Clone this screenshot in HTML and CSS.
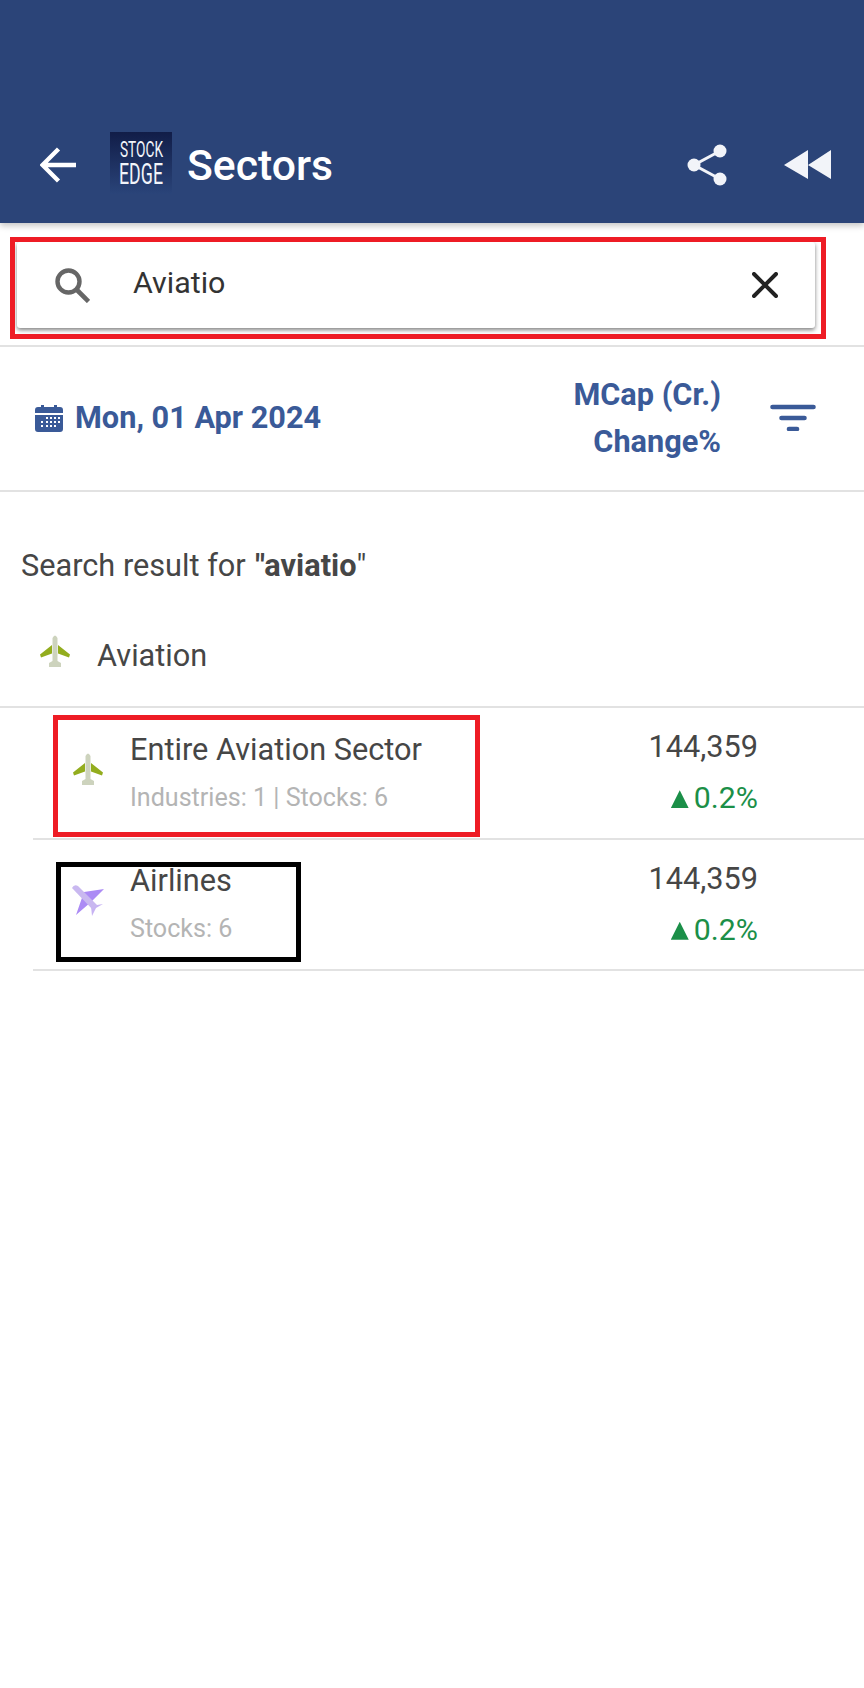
FILE: index.html
```html
<!DOCTYPE html>
<html lang="en">
<head>
<meta charset="utf-8">
<title>Sectors</title>
<link rel="stylesheet" href="styles.css">
</head>
<body>
<div class="page">
  <header class="appbar">
    <button class="icon-btn back" aria-label="Back">
      <svg width="37" height="36" viewBox="0 0 37 36"><path d="M36 18H3M18.500 2 2.500 18l16 16" fill="none" stroke="#fff" stroke-width="4.400"/></svg>
    </button>
    <div class="logo">
      <svg class="logo-svg" width="62" height="62" viewBox="0 0 62 62">
        <defs><linearGradient id="lg" x1="0" y1="0" x2="0" y2="1"><stop offset="0" stop-color="#111d48"/><stop offset="1" stop-color="#2a4479"/></linearGradient></defs>
        <rect width="62" height="62" fill="url(#lg)"/>
        <text class="logo-text" x="10" y="25" font-size="22" textLength="43" lengthAdjust="spacingAndGlyphs">STOCK</text>
        <text class="logo-text" x="9" y="52" font-size="29" textLength="44" lengthAdjust="spacingAndGlyphs">EDGE</text>
      </svg>
    </div>
    <h1 class="title">Sectors</h1>
    <button class="icon-btn share" aria-label="Share">
      <svg width="40" height="42" viewBox="0 0 40 42"><g fill="#f2f4f9"><circle cx="33" cy="7" r="6.500"/><circle cx="7" cy="21" r="6.500"/><circle cx="33" cy="35" r="6.500"/></g><path d="M33 7 7 21l26 14" fill="none" stroke="#f2f4f9" stroke-width="3"/></svg>
    </button>
    <button class="icon-btn rewind" aria-label="Rewind">
      <svg width="48" height="30" viewBox="0 0 48 30"><path d="M0 15 24 0v29zM24 15 47 0v29z" fill="#f2f4f9"/></svg>
    </button>
  </header>

  <div class="search-wrap">
    <div class="search-card">
      <svg class="search-icon" width="36" height="36" viewBox="0 0 36 36"><circle cx="14.500" cy="14.500" r="11" fill="none" stroke="#666" stroke-width="4.400"/><path d="m22.500 22.500 12 12" stroke="#666" stroke-width="4.600" fill="none"/></svg>
      <span class="search-text">Aviatio</span>
      <svg class="clear-icon" width="26" height="26" viewBox="0 0 26 26"><path d="M2 2l22 22M24 2 2 24" stroke="#222" stroke-width="4" stroke-linecap="round" fill="none"/></svg>
    </div>
  </div>

  <div class="filter-bar">
    <svg class="cal" width="28" height="28" viewBox="0 0 28 28">
      <path d="M6 1h3v2h10V1h3v2h3a3 3 0 0 1 3 3v3H0V6a3 3 0 0 1 3-3h3zM0 11h28v14a3 3 0 0 1-3 3H3a3 3 0 0 1-3-3z" fill="#3a5a98"/>
      <g fill="#fff"><rect x="11" y="13" width="2" height="2"/><rect x="15" y="13" width="2" height="2"/><rect x="19" y="13" width="2" height="2"/><rect x="23" y="13" width="2" height="2"/><rect x="6" y="17" width="2" height="2"/><rect x="11" y="17" width="2" height="2"/><rect x="15" y="17" width="2" height="2"/><rect x="19" y="17" width="2" height="2"/><rect x="23" y="17" width="2" height="2"/><rect x="6" y="21" width="2" height="2"/><rect x="11" y="21" width="2" height="2"/><rect x="15" y="21" width="2" height="2"/><rect x="19" y="21" width="2" height="2"/></g>
    </svg>
    <span class="date">Mon, 01 Apr 2024</span>
    <div class="columns">
      <div>MCap (Cr.)</div>
      <div>Change%</div>
    </div>
    <svg class="filter" width="46" height="27" viewBox="0 0 46 27"><path d="M2.500 3h41M11.500 14h23M19 25h8" stroke="#3a5a98" stroke-width="4.600" stroke-linecap="round" fill="none"/></svg>
  </div>

  <p class="result-note">Search result for <b class="query">"aviatio</b>"</p>

  <div class="group-head">
    <svg class="plane plane-head" width="30" height="32" viewBox="0 0 30 32"><use href="#plane-shape"/></svg>
    <span>Aviation</span>
  </div>

  <section class="rows">
    <div class="row">
      <svg class="plane" width="30" height="32" viewBox="0 0 30 32"><use href="#plane-shape"/></svg>
      <div class="row-main">
        <div class="row-title">Entire Aviation Sector</div>
        <div class="row-sub">Industries: 1 | Stocks: 6</div>
      </div>
      <div class="row-vals">
        <div class="mcap">144,359</div>
        <div class="chg"><i class="tri"></i>0.2%</div>
      </div>
    </div>
    <div class="row">
      <svg class="plane-alt" width="32" height="32" viewBox="0 0 32 32">
        <path d="M12 8 32 5 19 18zM12 8 4 31 19 18z" fill="#ac8bf5"/>
        <path d="M19 22 31 20 24 24 20 32z" fill="#c7b3f3"/>
        <path d="M0 4Q2 0 6 2L25 21 21 26z" fill="#c9b8f0"/>
      </svg>
      <div class="row-main">
        <div class="row-title">Airlines</div>
        <div class="row-sub">Stocks: 6</div>
      </div>
      <div class="row-vals">
        <div class="mcap">144,359</div>
        <div class="chg"><i class="tri"></i>0.2%</div>
      </div>
    </div>
  </section>

  <div class="mark mark-search"></div>
  <div class="mark mark-row"></div>
  <div class="mark mark-black"></div>

  <svg class="defs" width="0" height="0" aria-hidden="true">
    <defs>
      <g id="plane-shape">
        <path d="M12 10 0 19.500 1 22.500 12 18.500zM18 10 30 19.500 29 22.500 18 18.500z" fill="#93ad1e"/>
        <path d="M12.500 3Q15 -2 17.500 3V26L21 28V32H9V28L12.500 26z" fill="#cdd3bd"/>
      </g>
    </defs>
  </svg>
</div>
</body>
</html>
```

FILE: styles.css
```css
* {
  box-sizing: border-box;
}

html,
body {
  margin: 0;
  padding: 0;
  background: #fff;
}

body {
  font-family: Roboto, "Liberation Sans", sans-serif;
  color: #464646;
}

.page {
  position: relative;
  width: 864px;
  height: 1688px;
  overflow: hidden;
}

.defs {
  position: absolute;
}

.icon-btn {
  display: flex;
  padding: 0;
  border: 0;
  background: none;
}

.appbar {
  position: relative;
  display: flex;
  align-items: center;
  height: 223px;
  padding: 107px 32px 0 40px;
  background: #2b4478;
  box-shadow: 0 3px 6px rgba(0, 0, 0, 0.22);
}

.logo {
  display: flex;
  margin: -4px 0 0 33px;
}

.logo-svg {
  overflow: visible;
}

.logo-text {
  fill: #f1f4fa;
  font-family: Roboto, sans-serif;
  font-weight: 400;
}

.title {
  margin: 0 0 0 15px;
  color: #fff;
  font-size: 42.700px;
  font-weight: 500;
  flex: 1;
}

.rewind {
  margin-left: 57px;
}

.search-wrap {
  padding: 19px 49px 17px 17px;
  height: 124px;
  border-bottom: 2px solid #e2e2e2;
}

.search-card {
  display: flex;
  align-items: center;
  width: 798px;
  height: 86px;
  padding: 0 37px 0 37px;
  background: #fff;
  border-radius: 3px;
  box-shadow: 0 2px 4px rgba(0, 0, 0, 0.5);
}

.search-text {
  flex: 1;
  margin: -5px 0 0 43px;
  color: #333;
  font-size: 30.400px;
}

.filter-bar {
  display: flex;
  align-items: center;
  height: 145px;
  padding: 0 48px 2px 35px;
  border-bottom: 2px solid #e2e2e2;
  color: #3a5a98;
  font-weight: 700;
}

.date {
  flex: 1;
  margin-left: 12px;
  font-size: 30.700px;
}

.columns {
  font-size: 30.700px;
  line-height: 47px;
  text-align: right;
}

.filter {
  margin-left: 49px;
}

.result-note {
  margin: 56px 0 0 21px;
  color: #464646;
  font-size: 30.700px;
  line-height: 36px;
}

.query {
  margin-left: 2px;
}

.group-head {
  display: flex;
  align-items: center;
  height: 124px;
  padding: 20px 0 0 40px;
  border-bottom: 2px solid #e2e2e2;
  font-size: 30.700px;
}

.group-head span {
  margin-left: 27px;
}

.plane-head {
  margin-top: -6px;
}

.rows {
  padding-left: 33px;
}

.row {
  display: flex;
  height: 131.500px;
  padding: 0 106px 0 40px;
  border-bottom: 2px solid #e2e2e2;
  align-items: center;
}

.plane,
.plane-alt {
  flex: none;
  margin-top: -8px;
}

.row-main {
  flex: 1;
  margin-left: 27px;
}

.plane-alt {
  margin-left: -1px;
  margin-right: -1px;
}

.row-title {
  font-size: 30.700px;
  line-height: 34px;
}

.row-sub {
  margin-top: 16px;
  color: #b4b4b4;
  font-size: 25.100px;
  line-height: 30px;
}

.row-vals {
  text-align: right;
}

.mcap {
  font-size: 30.700px;
  line-height: 34px;
}

.chg {
  margin-top: 17px;
  color: #1b8f48;
  font-size: 30.300px;
  line-height: 34px;
}

.tri {
  display: inline-block;
  width: 18px;
  height: 18px;
  margin-right: 5px;
  background: #1b8f48;
  clip-path: polygon(50% 0, 100% 100%, 0 100%);
}

.mark {
  position: absolute;
  pointer-events: none;
}

.mark-search {
  left: 10px;
  top: 237px;
  width: 816px;
  height: 102px;
  border: 5px solid #ee1c25;
}

.mark-row {
  left: 53px;
  top: 715px;
  width: 427px;
  height: 122px;
  border: 5px solid #ee1c25;
}

.mark-black {
  left: 56px;
  top: 862px;
  width: 245px;
  height: 100px;
  border: 5px solid #000;
}
```
